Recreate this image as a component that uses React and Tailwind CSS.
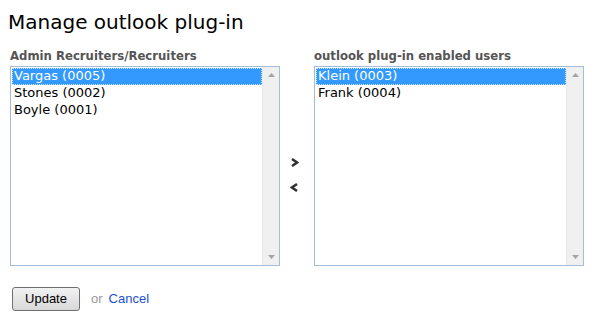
import React from "react";

function ListBox({ items }) {
  return (
    <div className="relative h-[200px] w-[270px] border border-[#a5bcd8] bg-white">
      <div className="absolute left-0 top-0 bottom-0 right-[17px] pt-[1px] pl-[1px]">
        {items.map((it, i) => (
          <div
            key={it}
            className={
              "h-[17px] pl-[2px] text-[13px] leading-[16px] text-black " +
              (i === 0 ? "bg-[#3399ff] text-white outline outline-1 outline-dotted outline-[#cde6ff] -outline-offset-1" : "")
            }
          >
            {it}
          </div>
        ))}
      </div>
      <div className="absolute right-0 top-0 bottom-0 w-[17px] bg-[#f0f0f0] border-l border-[#e6e6e6] flex flex-col justify-between items-center py-[6px]">
        <svg width="7" height="4" viewBox="0 0 7 4">
          <path d="M3.5 0 L7 4 L0 4 Z" fill="#a3a3a3" />
        </svg>
        <svg width="7" height="4" viewBox="0 0 7 4">
          <path d="M0 0 L7 0 L3.5 4 Z" fill="#a3a3a3" />
        </svg>
      </div>
    </div>
  );
}

export default function App() {
  return (
    <div
      className="w-[598px] h-[319px] bg-white pl-[8px] pt-[9px]"
      style={{ fontFamily: '"DejaVu Sans", Verdana, sans-serif' }}
    >
      <h1 className="text-[20px] leading-[26px] text-black font-normal">Manage outlook plug-in</h1>
      <div className="flex items-start mt-[14px] ml-[2px]">
        <div className="flex flex-col">
          <div className="text-[11.7px] leading-[14px] font-bold text-[#555] mb-[3px]">Admin Recruiters/Recruiters</div>
          <ListBox items={["Vargas (0005)", "Stones (0002)", "Boyle (0001)"]} />
        </div>
        <div className="w-[34px] self-stretch flex flex-col items-center justify-center gap-[16px] pt-[34px] pr-[5px] text-[#333]">
          <svg width="9" height="9" viewBox="0 0 9 9">
            <path d="M2 1 L7 4.5 L2 8" fill="none" stroke="#333" strokeWidth="2.5" />
          </svg>
          <svg width="9" height="9" viewBox="0 0 9 9">
            <path d="M7 1 L2 4.5 L7 8" fill="none" stroke="#333" strokeWidth="2.5" />
          </svg>
        </div>
        <div className="flex flex-col">
          <div className="text-[11.7px] leading-[14px] font-bold text-[#555] mb-[3px]">outlook plug-in enabled users</div>
          <ListBox items={["Klein (0003)", "Frank (0004)"]} />
        </div>
      </div>
      <div className="flex items-center mt-[21px] ml-[4px]" style={{ fontFamily: '"Liberation Sans", Arial, sans-serif' }}>
        <button className="h-[24px] w-[68px] rounded-[3px] border border-[#707070] bg-gradient-to-b from-[#f2f2f2] to-[#d8d8d8] text-[13px] text-black">
          Update
        </button>
        <span className="ml-[11px] text-[13px] text-[#999]">or</span>
        <a className="ml-[6px] text-[13px] text-[#1a4fcf]">Cancel</a>
      </div>
    </div>
  );
}
